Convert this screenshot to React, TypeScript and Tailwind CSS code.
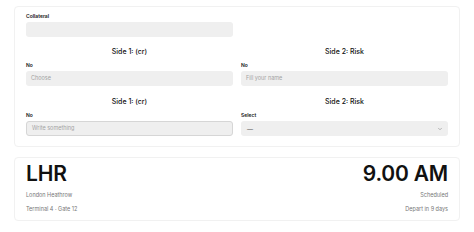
import { ChevronDown } from "lucide-react";

function Label({ children }: { children: React.ReactNode }) {
  return <div className="text-[5px] leading-[6px] font-semibold text-[#111]">{children}</div>;
}

function TextField({ label, placeholder, bordered }: { label: string; placeholder: string; bordered?: boolean }) {
  return (
    <div>
      <Label>{label}</Label>
      <div
        className={`mt-[3px] h-[15px] rounded-[3px] bg-[#efefef] px-[5px] flex items-center text-[5.5px] text-[#a3a3a3] ${
          bordered ? "border border-[#d6d6d6]" : ""
        }`}
      >
        {placeholder}
      </div>
    </div>
  );
}

function SelectField({ label }: { label: string }) {
  return (
    <div>
      <Label>{label}</Label>
      <div className="mt-[3px] h-[15px] rounded-[3px] bg-[#efefef] pl-[6px] pr-[5px] flex items-center justify-between text-[6px] text-[#555]">
        <span>—</span>
        <ChevronDown className="w-[6px] h-[6px] text-[#777]" strokeWidth={2} />
      </div>
    </div>
  );
}

function Heading({ children }: { children: React.ReactNode }) {
  return <div className="text-center text-[7px] leading-[10px] font-medium text-[#111]">{children}</div>;
}

export default function App() {
  return (
    <div
      className="w-[474px] h-[232px] bg-white px-[14px] pt-[6px] overflow-hidden"
      style={{ fontFamily: "Inter, 'Noto Sans', sans-serif" }}
    >
      <div className="rounded-[4px] border border-[#f1f1f1] px-[11px] pt-[6px] pb-[10px]">
        <div className="grid grid-cols-2 gap-x-[8px]">
          <TextField label="Collateral" placeholder="" />
          <div />
        </div>

        <div className="grid grid-cols-2 gap-x-[8px] mt-[10px]">
          <div>
            <Heading>Side 1: (cr)</Heading>
            <div className="mt-[5px]">
              <TextField label="No" placeholder="Choose" />
            </div>
          </div>
          <div>
            <Heading>Side 2: Risk</Heading>
            <div className="mt-[5px]">
              <TextField label="No" placeholder="Fill your name" />
            </div>
          </div>
        </div>

        <div className="grid grid-cols-2 gap-x-[8px] mt-[11px]">
          <div>
            <Heading>Side 1: (cr)</Heading>
            <div className="mt-[5px]">
              <TextField label="No" placeholder="Write something" bordered />
            </div>
          </div>
          <div>
            <Heading>Side 2: Risk</Heading>
            <div className="mt-[5px]">
              <SelectField label="Select" />
            </div>
          </div>
        </div>
      </div>

      <div className="mt-[10px] rounded-[4px] border border-[#f1f1f1] px-[11px] pt-[4px] pb-[7px] flex justify-between">
        <div>
          <div className="text-[21px] leading-[24px] font-semibold text-[#111] tracking-[-0.2px]">LHR</div>
          <div className="mt-[5px] text-[5.5px] leading-[8px] text-[#777]">London Heathrow</div>
          <div className="mt-[6px] text-[5.5px] leading-[8px] text-[#777]">Terminal 4 · Gate 12</div>
        </div>
        <div className="text-right">
          <div className="text-[21px] leading-[24px] font-semibold text-[#111] tracking-[-0.2px]">9.00 AM</div>
          <div className="mt-[5px] text-[5.5px] leading-[8px] text-[#777]">Scheduled</div>
          <div className="mt-[6px] text-[5.5px] leading-[8px] text-[#777]">Depart in 9 days</div>
        </div>
      </div>
    </div>
  );
}
